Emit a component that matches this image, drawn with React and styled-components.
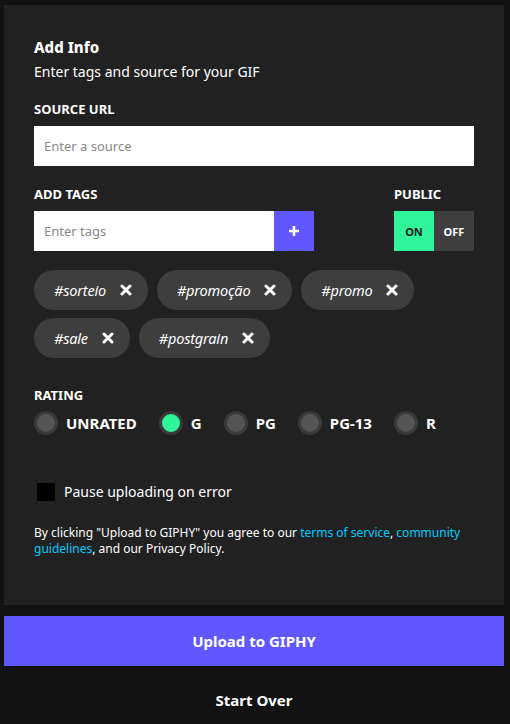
import React from "react";
import styled, { createGlobalStyle } from "styled-components";

const Global = createGlobalStyle`
  html, body { margin: 0; padding: 0; background: #121212; }
  body { font-family: "Noto Sans", "Inter", sans-serif; color: #fff; }
  * { box-sizing: border-box; }
`;

const Page = styled.div`
  width: 510px;
  height: 724px;
  padding: 5px 6px 0 4px;
  display: flex;
  flex-direction: column;
`;

const Panel = styled.div`
  background: #212121;
  padding: 33px 30px 48px 30px;
  display: flex;
  flex-direction: column;
`;

const Title = styled.h2`
  margin: 0;
  font-size: 15px;
  font-weight: 800;
  line-height: 18px;
`;

const Subtitle = styled.p`
  margin: 7px 0 0;
  font-size: 14px;
  line-height: 18px;
  color: #fff;
`;

const Label = styled.div`
  font-size: 13px;
  font-weight: 700;
  line-height: 16px;
  margin-bottom: ${(p) => p.$mb || 9}px;
  margin-top: ${(p) => p.$mt || 0}px;
`;

const Input = styled.input`
  border: 0;
  outline: 0;
  height: 40px;
  width: ${(p) => p.$w || "100%"};
  padding: 0 10px;
  font-family: inherit;
  font-size: 13px;
  color: #000;
  background: #fff;
  &::placeholder { color: #888; }
`;

const Row = styled.div`
  display: flex;
  justify-content: space-between;
  margin-top: ${(p) => p.$mt || 0}px;
`;

const Col = styled.div`
  display: flex;
  flex-direction: column;
`;

const InputGroup = styled.div`
  display: flex;
`;

const PlusButton = styled.button`
  width: 40px;
  height: 40px;
  border: 0;
  background: #6157ff;
  color: #fff;
  display: flex;
  align-items: center;
  justify-content: center;
  padding: 0;
`;

const Toggle = styled.div`
  display: flex;
`;

const ToggleOpt = styled.div`
  width: 40px;
  height: 40px;
  display: flex;
  align-items: center;
  justify-content: center;
  font-size: 11px;
  font-weight: 700;
  background: ${(p) => (p.$on ? "#2ff59b" : "#3e3e3e")};
  color: ${(p) => (p.$on ? "#212121" : "#fff")};
`;

const Tags = styled.div`
  display: flex;
  flex-wrap: wrap;
  gap: 8px 9px;
  margin-top: 19px;
`;

const Tag = styled.div`
  height: 40px;
  border-radius: 20px;
  background: #3e3e3e;
  display: flex;
  align-items: center;
  padding: 0 16px 0 20px;
  gap: 14px;
  font-size: 14.5px;
  font-style: italic;
  letter-spacing: -0.2px;
`;

const Ratings = styled.div`
  display: flex;
  align-items: center;
  gap: 22px;
`;

const RadioItem = styled.label`
  display: flex;
  align-items: center;
  gap: 8px;
  font-size: 15px;
  font-weight: 700;
`;

const Radio = styled.span`
  width: 24px;
  height: 24px;
  border-radius: 50%;
  border: 3px solid #3a3a3a;
  background: ${(p) => (p.$checked ? "#2ff59b" : "#555")};
`;

const CheckRow = styled.div`
  display: flex;
  align-items: center;
  gap: 9px;
  margin-top: 47px;
  padding-left: 3px;
  font-size: 14px;
`;

const Box = styled.span`
  width: 18px;
  height: 18px;
  background: #000;
`;

const Legal = styled.p`
  margin: 24px 0 0;
  font-size: 12px;
  line-height: 16px;
  color: #fff;
`;

const Link = styled.a`
  color: #00ccff;
  text-decoration: none;
`;

const Upload = styled.button`
  margin-top: 11px;
  height: 50px;
  border: 0;
  background: #6157ff;
  color: #fff;
  font-family: inherit;
  font-size: 15px;
  font-weight: 700;
`;

const StartOver = styled.button`
  margin-top: 14px;
  height: 40px;
  border: 0;
  background: transparent;
  color: #fff;
  font-family: inherit;
  font-size: 15px;
  font-weight: 700;
`;

const XIcon = () => (
  <svg width="12" height="12" viewBox="0 0 12 12">
    <path d="M2 2 L10 10 M10 2 L2 10" stroke="#fff" strokeWidth="3" strokeLinecap="round" />
  </svg>
);

const PlusIcon = () => (
  <svg width="12" height="12" viewBox="0 0 12 12">
    <path d="M6 1 V11 M1 6 H11" stroke="#fff" strokeWidth="2.6" />
  </svg>
);

const tags = ["#sorteio", "#promoção", "#promo", "#sale", "#postgrain"];
const ratings = ["UNRATED", "G", "PG", "PG-13", "R"];

export default function App() {
  return (
    <>
      <Global />
      <Page>
        <Panel>
          <Title>Add Info</Title>
          <Subtitle>Enter tags and source for your GIF</Subtitle>
          <Label $mt={20}>SOURCE URL</Label>
          <Input placeholder="Enter a source" />
          <Row $mt={20}>
            <Col>
              <Label>ADD TAGS</Label>
              <InputGroup>
                <Input $w="240px" placeholder="Enter tags" />
                <PlusButton><PlusIcon /></PlusButton>
              </InputGroup>
            </Col>
            <Col>
              <Label>PUBLIC</Label>
              <Toggle>
                <ToggleOpt $on>ON</ToggleOpt>
                <ToggleOpt>OFF</ToggleOpt>
              </Toggle>
            </Col>
          </Row>
          <Tags>
            {tags.map((t) => (
              <Tag key={t}>
                {t}
                <XIcon />
              </Tag>
            ))}
          </Tags>
          <Label $mt={29} $mb={8}>RATING</Label>
          <Ratings>
            {ratings.map((r) => (
              <RadioItem key={r}>
                <Radio $checked={r === "G"} />
                {r}
              </RadioItem>
            ))}
          </Ratings>
          <CheckRow>
            <Box />
            Pause uploading on error
          </CheckRow>
          <Legal>
            By clicking "Upload to GIPHY" you agree to our <Link>terms of service</Link>, <Link>community guidelines</Link>, and our Privacy Policy.
          </Legal>
        </Panel>
        <Upload>Upload to GIPHY</Upload>
        <StartOver>Start Over</StartOver>
      </Page>
    </>
  );
}
